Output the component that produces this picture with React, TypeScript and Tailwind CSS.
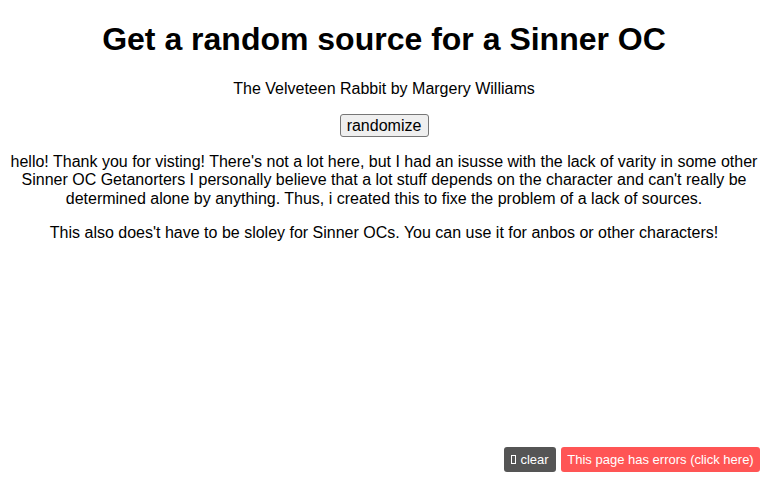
import React from "react";

export default function App() {
  return (
    <div className="min-h-[480px] bg-white text-black text-center px-2 relative" style={{ fontFamily: '"Liberation Sans", Arial, sans-serif' }}>
      <h1 className="text-[32px] leading-[36.8px] font-bold pt-[21.44px] mb-[21.44px]">Get a random source for a Sinner OC</h1>
      <p className="text-base leading-[18.4px] mb-4">The Velveteen Rabbit by Margery Williams</p>
      <div className="mb-4 h-[23px] flex justify-center">
        <button className="h-[23px] w-[89px] text-base leading-[18px] bg-[#efefef] border border-[#767676] rounded-[3px] text-black">randomize</button>
      </div>
      <p className="text-base leading-[18.4px] mb-4">
        hello! Thank you for visting! There's not a lot here, but I had an isusse with the lack of varity in some other Sinner OC Getanorters I personally believe that a lot stuff depends on the character and can't really be determined alone by anything. Thus, i created this to fixe the problem of a lack of sources.
      </p>
      <p className="text-base leading-[18.4px]">This also does't have to be sloley for Sinner OCs. You can use it for anbos or other characters!</p>
      <div className="absolute right-2 top-[447px] flex gap-[5px] text-[13px]">
        <button className="h-[25px] w-[52px] rounded-[3px] bg-[#555555] text-white flex items-center justify-center gap-[4px]">
          <span className="inline-block w-[5px] h-[9px] border border-white"></span>
          clear
        </button>
        <button className="h-[25px] w-[199px] rounded-[3px] bg-[#ff5555] text-white">This page has errors (click here)</button>
      </div>
    </div>
  );
}
